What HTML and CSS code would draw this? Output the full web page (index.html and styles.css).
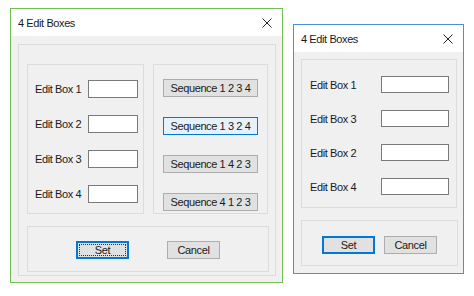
FILE: index.html
```html
<!DOCTYPE html>
<html lang="en">
<head>
    <meta charset="UTF-8">
    <title>4 Edit Boxes</title>
    <link rel="stylesheet" href="styles.css">
</head>
<body>
    <div class="desktop">
        <!-- Main dialog: edit boxes + sequence buttons -->
        <div class="window active">
            <div class="title-bar">
                <span class="title">4 Edit Boxes</span>
                <svg class="close" width="10" height="10" viewBox="0 0 10 10"><path d="M0.5 0.5 L9.5 9.5 M9.5 0.5 L0.5 9.5" /></svg>
            </div>
            <div class="window-body">
                <div class="panel">
                    <div class="top-row">
                        <div class="group edits">
                            <div class="field"><label>Edit Box 1</label><input type="text"></div>
                            <div class="field"><label>Edit Box 2</label><input type="text"></div>
                            <div class="field"><label>Edit Box 3</label><input type="text"></div>
                            <div class="field"><label>Edit Box 4</label><input type="text"></div>
                        </div>
                        <div class="group sequences">
                            <button class="btn seq">Sequence 1 2 3 4</button>
                            <button class="btn seq hover">Sequence 1 3 2 4</button>
                            <button class="btn seq">Sequence 1 4 2 3</button>
                            <button class="btn seq">Sequence 4 1 2 3</button>
                        </div>
                    </div>
                    <div class="group actions">
                        <button class="btn default focused">Set</button>
                        <button class="btn">Cancel</button>
                    </div>
                </div>
            </div>
        </div>

        <!-- Second dialog: reordered boxes -->
        <div class="window small">
            <div class="title-bar">
                <span class="title">4 Edit Boxes</span>
                <svg class="close" width="10" height="10" viewBox="0 0 10 10"><path d="M0.5 0.5 L9.5 9.5 M9.5 0.5 L0.5 9.5" /></svg>
            </div>
            <div class="window-body">
                <div class="group edits">
                    <div class="field"><label>Edit Box 1</label><input type="text"></div>
                    <div class="field"><label>Edit Box 3</label><input type="text"></div>
                    <div class="field"><label>Edit Box 2</label><input type="text"></div>
                    <div class="field"><label>Edit Box 4</label><input type="text"></div>
                </div>
                <div class="group actions">
                    <button class="btn default">Set</button>
                    <button class="btn">Cancel</button>
                </div>
            </div>
        </div>
    </div>
</body>
</html>
```

FILE: styles.css
```css
:root {
    --face: #f0f0f0;
    --line: #dcdcdc;
    --text: #1a1a1a;
    --btn-face: #e1e1e1;
    --btn-border: #adadad;
    --accent: #0078d7;
}

* {
    margin: 0;
    padding: 0;
    box-sizing: border-box;
}

body {
    background: #fff;
    font-family: "Liberation Sans", Arial, sans-serif;
    font-size: 11px;
    letter-spacing: -0.4px;
    color: var(--text);
}

.desktop {
    display: flex;
    align-items: flex-start;
    gap: 10px;
    padding: 8px 0 0 10px;
}

.window {
    display: flex;
    flex-direction: column;
    background: var(--face);
    border: 1px solid #72c050;
    width: 273px;
    height: 275px;
}

.window.small {
    border-color: #4a90d8;
    width: 171px;
    height: 250px;
    margin-top: 16px;
}

.title-bar {
    display: flex;
    align-items: center;
    justify-content: space-between;
    height: 27px;
    padding: 1px 10px 0 7px;
    background: #fff;
}

.close path {
    stroke: #222;
    stroke-width: 1;
    fill: none;
}

.window-body {
    flex: 1;
    padding: 8px 6px 6px 7px;
}

.small .window-body {
    display: flex;
    flex-direction: column;
    gap: 12px;
    padding: 7px 5px 5px 7px;
}

.panel {
    display: flex;
    flex-direction: column;
    gap: 12px;
    height: 232px;
    border: 1px solid var(--line);
    padding: 19px 6px 3px 8px;
}

.top-row {
    display: flex;
    gap: 9px;
    height: 150px;
}

.group {
    border: 1px solid var(--line);
}

.edits {
    display: flex;
    flex-direction: column;
    gap: 17px;
    width: 117px;
    padding: 15px 0 0 7px;
}

.field {
    display: flex;
    align-items: center;
}

.field label {
    width: 53px;
}

.field input {
    width: 50px;
    height: 18px;
    border: 1px solid #7a7a7a;
    background: #fff;
}

.sequences {
    display: flex;
    flex-direction: column;
    gap: 20px;
    width: 115px;
    padding: 14px 0 0 9px;
}

.btn {
    height: 18px;
    width: 53px;
    background: var(--btn-face);
    border: 1px solid var(--btn-border);
    font-family: inherit;
    font-size: 11px;
    letter-spacing: -0.4px;
    color: var(--text);
}

.btn.seq {
    width: 95px;
}

.btn.hover {
    background: #e5f1fb;
    border-color: var(--accent);
}

.btn.default {
    border: 2px solid var(--accent);
}

.btn.focused {
    outline: 1px dotted #333;
    outline-offset: -4px;
}

.actions {
    display: flex;
    gap: 38px;
    height: 46px;
    padding: 14px 0 0 48px;
}

/* second window is narrower */
.small .edits {
    width: 156px;
    height: 149px;
    padding: 16px 0 0 8px;
}

.small .field label {
    width: 71px;
}

.small .field input {
    width: 68px;
    height: 17px;
}

.small .actions {
    gap: 9px;
    padding: 15px 0 0 20px;
}
```
